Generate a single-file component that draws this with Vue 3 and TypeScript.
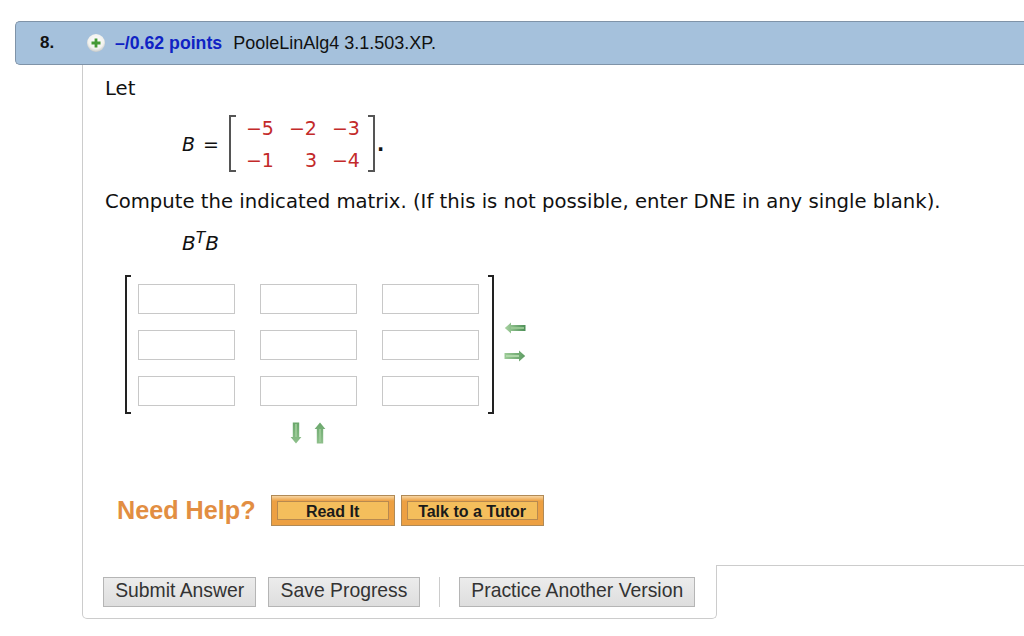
<script setup lang="ts">
const rowsB: string[][] = [
  ['−5', '−2', '−3'],
  ['−1', '3', '−4'],
]
const blanks: number[] = [1, 2, 3, 4, 5, 6, 7, 8, 9]
</script>

<template>
  <div class="page">
    <div class="head">
      <b class="num">8.</b>
      <svg class="plus" width="20" height="20" viewBox="0 0 20 20">
        <defs>
          <radialGradient id="disc" cx="50%" cy="40%" r="60%">
            <stop offset="0%" stop-color="#ffffff" />
            <stop offset="70%" stop-color="#f2f2ee" />
            <stop offset="100%" stop-color="#c4c8c8" />
          </radialGradient>
        </defs>
        <circle cx="10" cy="10" r="9" fill="url(#disc)" />
        <path d="M8.6 5.5h2.8v3.1h3.1v2.8h-3.1v3.1H8.6v-3.1H5.5V8.6h3.1z" fill="#459a36" />
      </svg>
      <b class="pts">–/0.62 points</b>
      <span class="code">PooleLinAlg4 3.1.503.XP.</span>
    </div>

    <div class="body">
      <p class="let">Let</p>
      <div class="eq">
        <span class="var">B</span>
        <span class="equals">=</span>
        <div class="small-matrix">
          <span v-for="(v, i) in rowsB.flat()" :key="i" class="cell">{{ v }}</span>
        </div>
        <span class="dot">.</span>
      </div>
      <p class="task">Compute the indicated matrix. (If this is not possible, enter DNE in any single blank).</p>
      <div class="expr"><i>B</i><sup>T</sup><i>B</i></div>

      <div class="answer">
        <div class="big-matrix">
          <input v-for="n in blanks" :key="n" class="blank" type="text" />
        </div>
        <div class="h-arrows">
          <svg width="22" height="12" viewBox="0 0 22 12">
            <defs>
              <linearGradient id="gh" x1="0" x2="1"><stop offset="0" stop-color="#a9d3a2" /><stop offset="1" stop-color="#4c8f56" /></linearGradient>
              <linearGradient id="gr" x1="0" x2="1"><stop offset="0" stop-color="#9ccb97" /><stop offset="1" stop-color="#5d9c62" /></linearGradient>
              <linearGradient id="gv" x1="0" x2="0" y1="0" y2="1"><stop offset="0" stop-color="#6aa76c" /><stop offset="1" stop-color="#8fc08c" /></linearGradient>
            </defs>
            <path d="M.8 6 7 .6V3h14.5v6H7v2.4z" fill="url(#gh)" />
            <path d="M7 6h13" stroke="#9ccb97" stroke-width="1.8" />
          </svg>
          <svg width="22" height="12" viewBox="0 0 22 12">
            <path d="M21.2 6 15 .6V3H.5v6H15v2.4z" fill="url(#gr)" />
            <path d="M2 6h13" stroke="#b4dbad" stroke-width="1.8" />
          </svg>
        </div>
      </div>
      <div class="v-arrows">
        <svg width="12" height="22" viewBox="0 0 12 22">
          <path d="M6 21.4.6 15H2.8V.5h6.4V15h2.2z" fill="url(#gv)" />
          <path d="M6 2v13" stroke="#9ccb97" stroke-width="1.8" />
        </svg>
        <svg width="12" height="22" viewBox="0 0 12 22">
          <path d="M6 .6.6 7H2.8v14.5h6.4V7h2.2z" fill="url(#gv)" />
          <path d="M6 7v13" stroke="#9ccb97" stroke-width="1.8" />
        </svg>
      </div>

      <div class="help">
        <span class="need">Need Help?</span>
        <button class="orange read"><span>Read It</span></button>
        <button class="orange tutor"><span>Talk to a Tutor</span></button>
      </div>
    </div>

    <div class="foot-row">
      <div class="foot">
        <button class="grey">Submit Answer</button>
        <button class="grey">Save Progress</button>
        <span class="sep"></span>
        <button class="grey">Practice Another Version</button>
      </div>
      <div class="notch"></div>
    </div>
  </div>
</template>

<style scoped>
.page {
  width: 1024px;
  height: 636px;
  overflow: hidden;
  padding-top: 21px;
  box-sizing: border-box;
  font-family: "Liberation Sans", Arial, sans-serif;
  color: #111;
  background: #fff;
}
.head {
  height: 44px;
  margin-left: 15px;
  box-sizing: border-box;
  display: flex;
  align-items: center;
  background: #a5c1dc;
  border: 1px solid #7f93a8;
  border-right: none;
  border-radius: 5px 0 0 5px;
  padding-left: 24px;
  font-size: 18px;
}
.num {
  width: 46px;
  font-size: 17px;
}
.plus {
  margin-right: 9px;
}
.pts {
  color: #0f23c4;
  font-size: 17.7px;
  margin-right: 11px;
}
.code {
  color: #111;
}
.body {
  margin-left: 82px;
  border-left: 1px solid #ccc;
  padding-left: 22px;
  height: 500px;
  box-sizing: border-box;
  font-family: "DejaVu Sans", Verdana, sans-serif;
  display: flow-root;
}
p {
  margin: 0;
}
.let {
  font-size: 19.65px;
  line-height: 22px;
  margin-top: 13px;
}
.eq {
  display: flex;
  align-items: center;
  margin-top: 15px;
  margin-left: 77px;
  font-size: 19px;
  height: 57px;
}
.var {
  font-style: italic;
  margin-right: 8px;
}
.equals {
  margin-right: 10px;
}
.small-matrix {
  display: grid;
  grid-template-columns: repeat(3, 43px);
  grid-auto-rows: 32px;
  align-items: center;
  align-content: center;
  justify-items: end;
  box-sizing: border-box;
  width: 146px;
  height: 57px;
  border: 2px solid #555;
  color: #c32a2a;
  font-size: 19px;
  border-image: linear-gradient(to right, #555 7px, transparent 7px, transparent calc(100% - 7px), #555 calc(100% - 7px)) 2;
}
.dot {
  align-self: flex-end;
  margin: 0 0 17px 2px;
  font-size: 19px;
  font-weight: 700;
}
.task {
  font-size: 19.65px;
  line-height: 22px;
  margin-top: 19px;
}
.expr {
  margin: 18px 0 0 77px;
  font-size: 20px;
  line-height: 24px;
  height: 24px;
}
.expr sup {
  font-size: 15.5px;
  font-style: italic;
  line-height: 0;
  vertical-align: 7px;
}
.answer {
  display: flex;
  align-items: center;
  margin: 20px 0 0 20px;
}
.big-matrix {
  display: grid;
  grid-template-columns: repeat(3, 97px);
  grid-auto-rows: 30px;
  column-gap: 25px;
  row-gap: 16px;
  box-sizing: border-box;
  width: 369px;
  height: 139px;
  padding: 7px 11px;
  border: 2px solid #222;
  border-image: linear-gradient(to right, #222 6px, transparent 6px, transparent calc(100% - 6px), #222 calc(100% - 6px)) 2;
}
.blank {
  box-sizing: border-box;
  width: 97px;
  height: 30px;
  border: 1px solid #c8c8c8;
  padding: 0;
  background: #fff;
}
.h-arrows {
  display: flex;
  flex-direction: column;
  gap: 16px;
  margin: 0 0 6px 10px;
}
.v-arrows {
  display: flex;
  gap: 12px;
  margin: 8px 0 0 185px;
}
.help {
  display: flex;
  align-items: center;
  margin: 51px 0 0 12px;
}
.need {
  font-family: "Liberation Sans", Arial, sans-serif;
  font-size: 25.2px;
  font-weight: 700;
  color: #e28e42;
  margin-right: 15px;
}
.orange {
  height: 31px;
  box-sizing: border-box;
  padding: 5px;
  display: flex;
  border: 1px solid #b08a57;
  background: linear-gradient(#f7d6a4, #eda042 5px);
  font-family: "Liberation Sans", Arial, sans-serif;
  font-size: 16px;
  font-weight: 700;
  color: #1a1a1a;
}
.orange span {
  flex: 1;
  line-height: 19px;
  text-align: center;
  background: #f4be5c;
  border: 1px solid #b8894f;
}
.read {
  width: 124px;
  margin-right: 6px;
}
.tutor {
  width: 143px;
}
.foot-row {
  display: flex;
  height: 54px;
  margin-left: 82px;
}
.foot {
  width: 635px;
  box-sizing: border-box;
  display: flex;
  align-items: flex-start;
  padding: 12px 0 0 20px;
  border: 1px solid #ccc;
  border-top: none;
  border-radius: 0 0 5px 5px;
}
.notch {
  flex: 1;
  border-top: 1px solid #ccc;
}
.grey {
  height: 30px;
  box-sizing: border-box;
  padding: 0 11.2px 3px;
  margin-right: 12px;
  border: 1px solid #b5b5b5;
  background: linear-gradient(#ececec, #dedede);
  font-family: "Liberation Sans", Arial, sans-serif;
  font-size: 19.35px;
  color: #333;
}
.sep {
  width: 1px;
  height: 30px;
  background: #ccc;
  margin: 0 19px 0 7.5px;
}
</style>
